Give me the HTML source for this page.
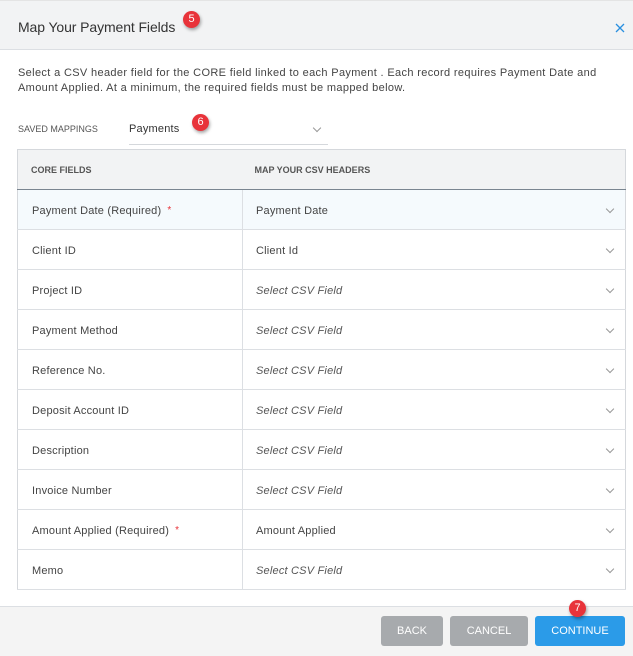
<!DOCTYPE html><html><head><style>
*{box-sizing:border-box;margin:0;padding:0}
body{width:633px;height:656px;background:#fff;font-family:"Liberation Sans",sans-serif;position:relative;overflow:hidden;color:#333}
.hdr{position:absolute;left:0;top:0;width:633px;height:50px;background:#f2f3f4;border-bottom:1px solid #dcdfe3;border-top:1px solid #e4e4e4}
.title{position:absolute;left:18px;top:18px;font-size:14px;color:#333;letter-spacing:-0.1px}
.badge{position:absolute;width:17px;height:17px;border-radius:50%;background:#e8333a;color:#fff;font-size:11px;text-align:center;line-height:17px;box-shadow:1px 2px 3px rgba(0,0,0,.35)}
.desc{position:absolute;left:18px;top:66px;font-size:11px;letter-spacing:0.35px;line-height:15px;color:#444;width:615px;white-space:nowrap}
.sm{position:absolute;left:18px;top:124px;font-size:9px;color:#555}
.sel{position:absolute;left:129px;top:121px;width:199px;height:24px;border-bottom:1px solid #d5d8dc;font-size:11px;line-height:17px;color:#333;letter-spacing:0.2px}
.chev{position:absolute;width:6px;height:6px;border-right:1px solid #999;border-bottom:1px solid #999;transform:rotate(45deg)}
table{position:absolute;left:17px;top:149px;width:609px;border-collapse:collapse;border:1px solid #d5d8dc}
th{height:40px;background:#f2f3f4;text-align:left;font-size:9px;font-weight:bold;color:#555;border-bottom:1px solid #7a8590}
th:first-child{padding-left:13px;width:225px}
th:last-child{padding-left:12px}
td{height:40px;font-size:11px;color:#444;border-bottom:1px solid #dcdfe3;position:relative;padding-top:2px;letter-spacing:0.2px}
td:first-child{padding-left:14px;border-right:1px solid #dcdfe3}
td:last-child{padding-left:13px}
td i{color:#555}
tr.a td{background:#f5fafd}
.req{color:#e8333a;font-size:10px;vertical-align:top;margin-left:6px}
.ftr{position:absolute;left:0;top:606px;width:633px;height:50px;background:#f4f4f4;border-top:1px solid #dcdfe3}
.btn{position:absolute;top:616px;height:30px;border-radius:3px;color:#fff;font-size:11px;text-align:center;line-height:30px}
</style></head><body>
<div class="hdr"><div class="title">Map Your Payment Fields</div>
<svg style="position:absolute;left:615px;top:22px" width="10" height="10" viewBox="0 0 10 10"><path d="M1 1L9 9M9 1L1 9" stroke="#2a8fe0" stroke-width="1.3"/></svg></div>
<div class="badge" style="left:183px;top:11px">5</div>
<div class="desc">Select a CSV header field for the CORE field linked to each Payment . Each record requires Payment Date and<br>Amount Applied. At a minimum, the required fields must be mapped below.</div>
<div class="sm">SAVED MAPPINGS</div>
<div class="sel">Payments<div class="chev" style="right:8px;top:4px"></div></div>
<div class="badge" style="left:192px;top:114px">6</div>
<table>
<tr><th>CORE FIELDS</th><th>MAP YOUR CSV HEADERS</th></tr>
<tr class="a"><td>Payment Date (Required)<span class="req">*</span></td><td>Payment Date<div class="chev" style="right:12px;top:16px"></div></td></tr>
<tr><td>Client ID</td><td>Client Id<div class="chev" style="right:12px;top:16px"></div></td></tr>
<tr><td>Project ID</td><td><i>Select CSV Field</i><div class="chev" style="right:12px;top:16px"></div></td></tr>
<tr><td>Payment Method</td><td><i>Select CSV Field</i><div class="chev" style="right:12px;top:16px"></div></td></tr>
<tr><td>Reference No.</td><td><i>Select CSV Field</i><div class="chev" style="right:12px;top:16px"></div></td></tr>
<tr><td>Deposit Account ID</td><td><i>Select CSV Field</i><div class="chev" style="right:12px;top:16px"></div></td></tr>
<tr><td>Description</td><td><i>Select CSV Field</i><div class="chev" style="right:12px;top:16px"></div></td></tr>
<tr><td>Invoice Number</td><td><i>Select CSV Field</i><div class="chev" style="right:12px;top:16px"></div></td></tr>
<tr><td>Amount Applied (Required)<span class="req">*</span></td><td>Amount Applied<div class="chev" style="right:12px;top:16px"></div></td></tr>
<tr><td>Memo</td><td><i>Select CSV Field</i><div class="chev" style="right:12px;top:16px"></div></td></tr>
</table>
<div class="ftr"></div>
<div class="btn" style="left:381px;width:62px;background:#a7aaad">BACK</div>
<div class="btn" style="left:450px;width:78px;background:#a7aaad">CANCEL</div>
<div class="btn" style="left:535px;width:90px;background:#2b9be8">CONTINUE</div>
<div class="badge" style="left:569px;top:600px">7</div>
</body></html>
